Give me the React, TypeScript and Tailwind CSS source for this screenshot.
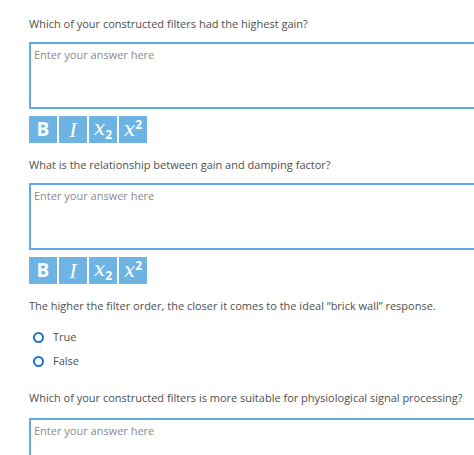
import React from "react";

const font = { fontFamily: '"Open Sans", "Liberation Sans", sans-serif' };

function Toolbar() {
  return (
    <div className="flex gap-[2px] mt-[7px]">
      <button className="w-[28px] h-[27px] bg-[#6db4e5] text-white text-[19px] font-bold flex items-center justify-center">
        B
      </button>
      <button className="w-[28px] h-[27px] bg-[#6db4e5] text-white text-[22px] italic flex items-center justify-center font-['Liberation_Serif',serif]">
        I
      </button>
      <button className="w-[28px] h-[27px] bg-[#6db4e5] text-white text-[20px] italic flex items-center justify-center leading-none font-['DejaVu_Serif',serif]">
        <span className="-mt-[3px]">x</span>
        <span className="text-[12px] not-italic font-bold font-['Open_Sans',sans-serif] mt-[10px]">2</span>
      </button>
      <button className="w-[28px] h-[27px] bg-[#6db4e5] text-white text-[20px] italic flex items-center justify-center leading-none font-['DejaVu_Serif',serif]">
        <span className="-mt-[1px]">x</span>
        <span className="text-[12px] not-italic font-bold font-['Open_Sans',sans-serif] -mt-[10px]">2</span>
      </button>
    </div>
  );
}

function AnswerBox() {
  return (
    <div className="w-[470px] h-[67px] border-2 border-[#62aae3] px-[3px] pt-[3px] text-[11px] leading-[16px]">
      <span className="text-[#8a8a8a]">Enter your answer here</span>
    </div>
  );
}

function Radio({ label }: { label: string }) {
  return (
    <label className="flex items-center gap-[9px] h-[24px]">
      <span className="w-[11px] h-[11px] rounded-full border-2 border-[#1f74c4] ml-[4px]" />
      <span className="text-[11px] text-[#4f4f4f]">{label}</span>
    </label>
  );
}

export default function App() {
  return (
    <div className="w-[474px] h-[455px] overflow-hidden bg-white" style={font}>
      <div className="pl-[29px] pt-[15px]">
        <p className="text-[11px] text-[#4f4f4f] leading-[18px] whitespace-nowrap">
          Which of your constructed filters had the highest gain?
        </p>
        <div className="mt-[9px]">
          <AnswerBox />
        </div>
        <Toolbar />

        <p className="text-[11px] text-[#4f4f4f] leading-[18px] mt-[13px] whitespace-nowrap">
          What is the relationship between gain and damping factor?
        </p>
        <div className="mt-[9px]">
          <AnswerBox />
        </div>
        <Toolbar />

        <p className="text-[11px] text-[#4f4f4f] leading-[18px] mt-[13px] whitespace-nowrap">
          The higher the filter order, the closer it comes to the ideal “brick wall” response.
        </p>
        <div className="mt-[10px] flex flex-col">
          <Radio label="True" />
          <Radio label="False" />
        </div>

        <p className="text-[11px] text-[#4f4f4f] leading-[18px] mt-[16px] whitespace-nowrap">
          Which of your constructed filters is more suitable for physiological signal processing?
        </p>
        <div className="mt-[11px]">
          <AnswerBox />
        </div>
      </div>
    </div>
  );
}
